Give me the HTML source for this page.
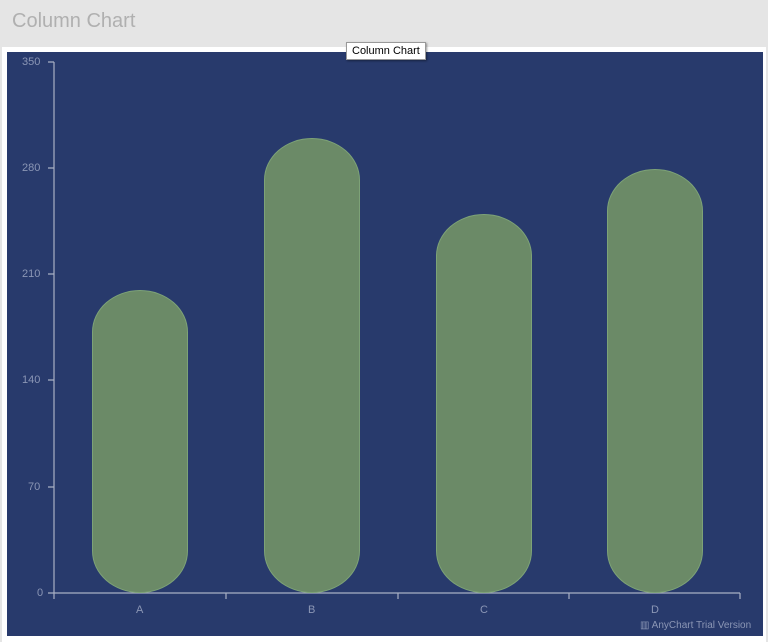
<!DOCTYPE html>
<html><head><style>
body{margin:0;width:768px;height:642px;background:#e5e5e5;position:relative;overflow:hidden;font-family:"Liberation Sans",sans-serif}
.t{position:absolute;left:12px;top:10px;font-size:20px;color:#b0b0b0}
.f{position:absolute;left:2px;top:47px;width:764px;height:595px;background:#fff}
.p{position:absolute;left:7px;top:52px;width:756px;height:584px;background:#283a6c}
.b{position:absolute;width:94px;background:#6b8a67;border:1px solid #7da277;border-radius:48px/42px}
.l{position:absolute;font-size:11px;color:#8b96b5}
.tip{position:absolute;left:346px;top:42px;border:1px solid #999;background:#fff;font-size:11px;padding:2px 5px;box-shadow:1px 1px 2px rgba(0,0,0,.4)}
</style></head><body>
<div class="t">Column Chart</div>
<div class="f"></div>
<div class="p"></div>
<svg style="position:absolute;left:0;top:0" width="768" height="642">
<g stroke="#a9b0c4" stroke-width="1.2" fill="none">
<path d="M54 62V596M48 62H54M48 168H54M48 274H54M48 380H54M48 487H54M48 593H740M226 593V599M398 593V599M569 593V599M740 593V599M54 593V599"/>
</g></svg>
<div class="b" style="left:92px;top:290px;height:301px"></div>
<div class="b" style="left:264px;top:138px;height:453px"></div>
<div class="b" style="left:436px;top:214px;height:377px"></div>
<div class="b" style="left:607px;top:169px;height:422px"></div>
<div class="l" style="left:22px;top:56px">350</div>
<div class="l" style="left:22px;top:162px">280</div>
<div class="l" style="left:22px;top:268px">210</div>
<div class="l" style="left:22px;top:374px">140</div>
<div class="l" style="left:28px;top:481px">70</div>
<div class="l" style="left:37px;top:587px">0</div>
<div class="l" style="left:136px;top:604px">A</div>
<div class="l" style="left:308px;top:604px">B</div>
<div class="l" style="left:480px;top:604px">C</div>
<div class="l" style="left:651px;top:604px">D</div>
<div class="l" style="left:640px;top:620px;font-size:10px">▥ AnyChart Trial Version</div>
<div class="tip">Column Chart</div>
</body></html>
